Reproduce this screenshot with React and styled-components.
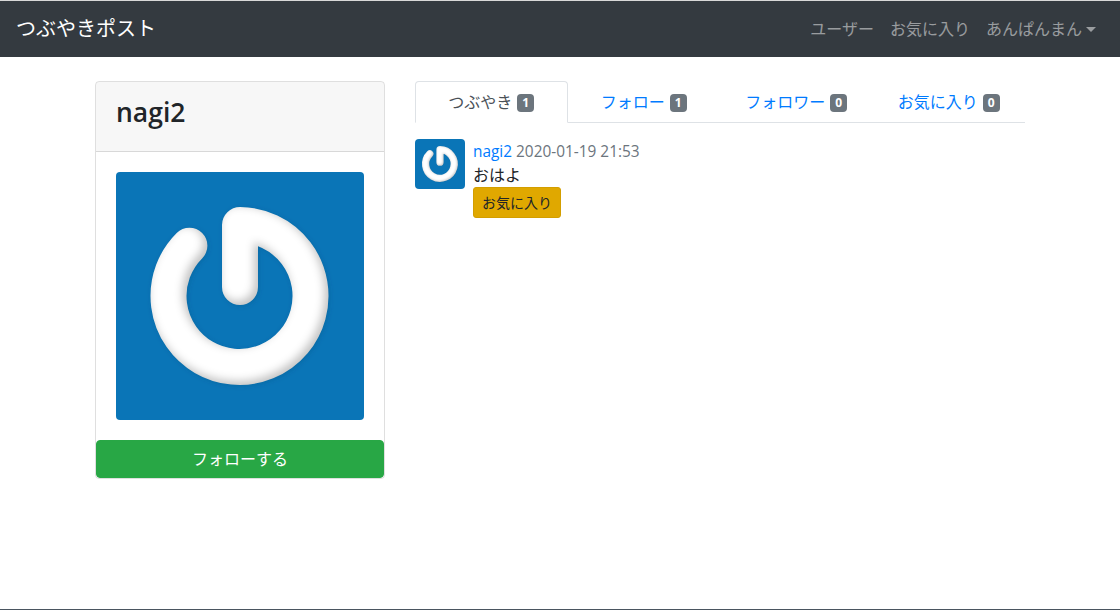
import React, { useId } from "react";
import styled, { createGlobalStyle } from "styled-components";

const Global = createGlobalStyle`
* { box-sizing: border-box; }
html, body { margin: 0; padding: 0; background: #fff; }
body {
  font-family: "Open Sans", "Noto Sans", "Noto Sans CJK JP", sans-serif;
  font-size: 16px;
  line-height: 24px;
  color: #212529;
}
`

const Page = styled.div`
height: 610px;
overflow: hidden;
border-top: 1px solid #d8d8d8;
border-bottom: 1px solid #4a5560;
`

const Navbar = styled.nav`
height: 56px;
background-color: #343a40;
display: flex;
align-items: center;
justify-content: space-between;
padding: 0 16px;
`

const Brand = styled.a`
font-size: 20px;
color: #fff;
`

const NavLinks = styled.div`
display: flex;
align-items: center;
`

const NavLink = styled.a`
padding: 0 8px;
color: rgba(255, 255, 255, 0.5);
display: flex;
align-items: center;
`

const Caret = styled.span`
margin-left: 4px;
border-top: 5px solid rgba(255, 255, 255, 0.5);
border-left: 5px solid transparent;
border-right: 5px solid transparent;
`

const Container = styled.div`
width: 930px;
margin: 24px auto 0;
display: flex;
gap: 30px;
`

const Aside = styled.aside`
width: 290px;
flex-shrink: 0;
`

const Card = styled.div`
border: 1px solid rgba(0, 0, 0, 0.125);
border-radius: 4px;
overflow: hidden;
`

const CardHeader = styled.div`
height: 70px;
padding: 12px 20px;
background-color: rgba(0, 0, 0, 0.03);
border-bottom: 1px solid rgba(0, 0, 0, 0.125);
`

const CardTitle = styled.h3`
margin: 0;
font-size: 26.5px;
line-height: 36px;
font-weight: 600;
`

const CardBody = styled.div`
padding: 20px;
`

const FollowButton = styled.button`
display: block;
width: 100%;
height: 38px;
border: 1px solid #28a745;
border-radius: 4px;
background-color: #28a745;
color: #fff;
font: inherit;
`

const LogoSvg = styled.svg`
display: block;
width: ${props => props.$size}px;
height: ${props => props.$size}px;
border-radius: ${props => props.$radius}px;
`

const Main = styled.main`
width: 610px;
`

const Tabs = styled.div`
display: flex;
height: 42px;
border-bottom: 1px solid #dee2e6;
`

const Tab = styled.a`
flex: 1 1 0;
height: ${props => props.$active ? "42px" : "41px"};
display: flex;
align-items: center;
justify-content: center;
gap: 5px;
color: ${props => props.$active ? "#495057" : "#007bff"};
background: #fff;
border: 1px solid ${props => props.$active ? "#dee2e6" : "transparent"};
border-bottom-color: ${props => props.$active ? "#fff" : "transparent"};
border-radius: 4px 4px 0 0;
`

const Badge = styled.span`
display: inline-block;
margin-top: 2px;
padding: 3px 5px;
font-size: 12px;
line-height: 12px;
font-weight: 700;
color: #fff;
background-color: #6c757d;
border-radius: 4px;
`

const Post = styled.div`
display: flex;
gap: 8px;
margin-top: 16px;
`

const PostBody = styled.div`
display: flex;
flex-direction: column;
align-items: flex-start;
`

const PostMeta = styled.div`
color: #6c757d;
font-size: 15.4px;
line-height: 24px;
padding-top: 1px;
height: 24px;
`

const UserLink = styled.a`
color: #007bff;
`

const PostText = styled.p`
margin: 0;
line-height: 24px;
height: 24px;
`

const FavoriteButton = styled.button`
height: 31px;
padding: 4px 8px;
font: inherit;
font-size: 14px;
line-height: 21px;
color: #212529;
background-color: #e0a800;
border: 1px solid #d39e00;
border-radius: 3px;
`

const Logo = ({ size, radius }) => {
    const id = useId()
    const ring = "M73.4 73.7 A71 71 0 1 0 124 53 L124 115"
    return (
        <LogoSvg viewBox="0 0 248 248" $size={size} $radius={radius}>
            <defs>
                <filter id={`${id}s`} x="-20%" y="-20%" width="140%" height="140%">
                    <feGaussianBlur stdDeviation="2.5" />
                </filter>
                <filter id={`${id}b`} x="-20%" y="-20%" width="140%" height="140%">
                    <feGaussianBlur stdDeviation="4" />
                </filter>
                <mask id={`${id}m`} maskUnits="userSpaceOnUse" x="0" y="0" width="248" height="248">
                    <path d={ring} fill="none" stroke="#fff" strokeWidth="36" strokeLinecap="round" strokeLinejoin="round" />
                </mask>
            </defs>
            <rect width="248" height="248" fill="#0a75b7" />
            <path d={ring} fill="none" stroke="#04456e" strokeOpacity="0.25" strokeWidth="36" strokeLinecap="round" strokeLinejoin="round" filter={`url(#${id}s)`} transform="translate(1 1)" />
            <g mask={`url(#${id}m)`}>
                <rect width="248" height="248" fill="#c4c4c4" />
                <path d={ring} fill="none" stroke="#fff" strokeWidth="34" strokeLinecap="round" strokeLinejoin="round" filter={`url(#${id}b)`} transform="translate(-3 -3)" />
            </g>
        </LogoSvg>
    )
}

const TabItem = ({ label, count, active }) => (
    <Tab $active={active}>
        {label}
        <Badge>{count}</Badge>
    </Tab>
)

const App = () => {
    return (
        <Page>
            <Global />
            <Navbar>
                <Brand>つぶやきポスト</Brand>
                <NavLinks>
                    <NavLink>ユーザー</NavLink>
                    <NavLink>お気に入り</NavLink>
                    <NavLink>あんぱんまん<Caret /></NavLink>
                </NavLinks>
            </Navbar>
            <Container>
                <Aside>
                    <Card>
                        <CardHeader>
                            <CardTitle>nagi2</CardTitle>
                        </CardHeader>
                        <CardBody>
                            <Logo size={248} radius={4} />
                        </CardBody>
                        <FollowButton>フォローする</FollowButton>
                    </Card>
                </Aside>
                <Main>
                    <Tabs>
                        <TabItem label="つぶやき" count={1} active />
                        <TabItem label="フォロー" count={1} />
                        <TabItem label="フォロワー" count={0} />
                        <TabItem label="お気に入り" count={0} />
                    </Tabs>
                    <Post>
                        <Logo size={50} radius={4} />
                        <PostBody>
                            <PostMeta>
                                <UserLink>nagi2</UserLink> 2020-01-19 21:53
                            </PostMeta>
                            <PostText>おはよ</PostText>
                            <FavoriteButton>お気に入り</FavoriteButton>
                        </PostBody>
                    </Post>
                </Main>
            </Container>
        </Page>
    )
}

export default App
